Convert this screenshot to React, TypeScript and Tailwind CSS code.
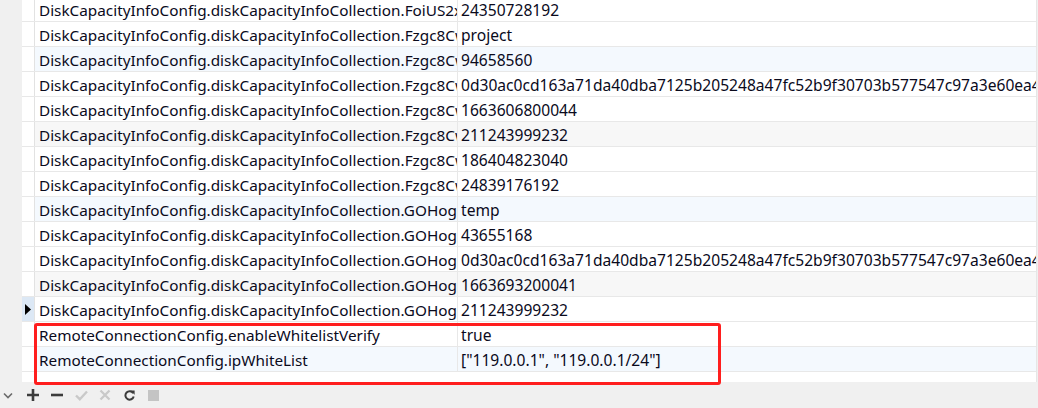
import React from "react";

const PREFIX = "DiskCapacityInfoConfig.diskCapacityInfoCollection.";
const HEX = "0d30ac0cd163a71da40dba7125b205248a47fc52b9f30703b577547c97a3e60ea4f1c2";

type Row = { name: string; value: string; bg: string };

const rows: Row[] = [
  { name: PREFIX + "FoiUS2xQ.totalCapacity", value: "24350728192", bg: "bg-white" },
  { name: PREFIX + "Fzgc8CwE.name", value: "project", bg: "bg-white" },
  { name: PREFIX + "Fzgc8CwE.usedCapacity", value: "94658560", bg: "bg-[#f4f9fe]" },
  { name: PREFIX + "Fzgc8CwE.id", value: HEX, bg: "bg-white" },
  { name: PREFIX + "Fzgc8CwE.updateTime", value: "1663606800044", bg: "bg-white" },
  { name: PREFIX + "Fzgc8CwE.totalCapacity", value: "211243999232", bg: "bg-[#f7f7f7]" },
  { name: PREFIX + "Fzgc8CwE.freeCapacity", value: "186404823040", bg: "bg-white" },
  { name: PREFIX + "Fzgc8CwE.availableCapacity", value: "24839176192", bg: "bg-white" },
  { name: PREFIX + "GOHogK2a.name", value: "temp", bg: "bg-[#f4f9fe]" },
  { name: PREFIX + "GOHogK2a.usedCapacity", value: "43655168", bg: "bg-white" },
  { name: PREFIX + "GOHogK2a.id", value: HEX, bg: "bg-white" },
  { name: PREFIX + "GOHogK2a.updateTime", value: "1663693200041", bg: "bg-[#f7f7f7]" },
  { name: PREFIX + "GOHogK2a.totalCapacity", value: "211243999232", bg: "bg-white" },
  { name: "RemoteConnectionConfig.enableWhitelistVerify", value: "true", bg: "bg-white" },
  { name: "RemoteConnectionConfig.ipWhiteList", value: '["119.0.0.1", "119.0.0.1/24"]', bg: "bg-[#f4f9fe]" },
];

function ToolIcon({ children }: { children: React.ReactNode }) {
  return <div className="w-[24px] h-[26px] flex items-center justify-center">{children}</div>;
}

export default function App() {
  return (
    <div
      className="w-[1038px] h-[408px] bg-[#f0f0f0] flex flex-col overflow-hidden text-[#0a0a1c]"
      style={{ fontFamily: '"Noto Sans", "Microsoft YaHei", sans-serif' }}
    >
      <div className="h-[382px] flex pl-[22px] pr-[1px] relative">
        <div className="flex-1 bg-white border-r border-[#e6e6e6] overflow-hidden">
          <div className="-mt-[3px] flex flex-col">
            {rows.map((r, i) => (
              <div key={i} className="flex h-[25px] border-b border-[#e8e8e8]">
                <div
                  className={
                    "w-[13px] shrink-0 border-r border-[#e2e2e2] flex items-center justify-center " +
                    (i === 12 ? "bg-[#dce8f5]" : "bg-white")
                  }
                >
                  {i === 12 && (
                    <svg width="6" height="11" viewBox="0 0 6 11">
                      <path d="M0 0 L6 5.5 L0 11 Z" fill="#000" />
                    </svg>
                  )}
                </div>
                <div className={"flex flex-1 " + r.bg}>
                  <div className="w-[423px] shrink-0 border-r border-[#e8e8e8] overflow-hidden whitespace-nowrap pl-[4px] pt-[1px] text-[15.3px] leading-[24px]">
                    {r.name}
                  </div>
                  <div className="flex-1 overflow-hidden whitespace-nowrap pl-[3px] pt-[1px] text-[15.6px] leading-[24px]">
                    {r.value}
                  </div>
                </div>
              </div>
            ))}
          </div>
        </div>
        <div className="absolute left-[34px] top-[323px] w-[687px] h-[62px] border-[3px] border-[#ff1e1e] rounded-[3px] pointer-events-none" />
      </div>
      <div className="h-[26px] flex items-center">
        <div className="w-[16px] h-[26px] flex items-center justify-center">
          <svg width="10" height="7" viewBox="0 0 10 7">
            <path d="M1 1.5 L5 5.5 L9 1.5" stroke="#6b6b6b" strokeWidth="1.6" fill="none" />
          </svg>
        </div>
        <div className="w-[5px]" />
        <ToolIcon>
          <svg width="12" height="12" viewBox="0 0 12 12">
            <path d="M6 0 V12 M0 6 H12" stroke="#3c3c3c" strokeWidth="2.6" />
          </svg>
        </ToolIcon>
        <ToolIcon>
          <svg width="12" height="12" viewBox="0 0 12 12">
            <path d="M0 6 H12" stroke="#3c3c3c" strokeWidth="2.6" />
          </svg>
        </ToolIcon>
        <ToolIcon>
          <svg width="13" height="11" viewBox="0 0 13 11">
            <path d="M1 5.5 L4.8 9.2 L12 1.5" stroke="#c9c9c9" strokeWidth="2.4" fill="none" />
          </svg>
        </ToolIcon>
        <ToolIcon>
          <svg width="12" height="12" viewBox="0 0 12 12">
            <path d="M1.5 1.5 L10.5 10.5 M10.5 1.5 L1.5 10.5" stroke="#c9c9c9" strokeWidth="2.3" />
          </svg>
        </ToolIcon>
        <ToolIcon>
          <svg width="11" height="11" viewBox="0 0 11 11">
            <path d="M9.2 3.2 A4.2 4.2 0 1 0 9.7 6.5" stroke="#3c3c3c" strokeWidth="2" fill="none" />
            <path d="M6.4 0.6 L10.6 0.6 L10.6 4.8 Z" fill="#3c3c3c" />
          </svg>
        </ToolIcon>
        <ToolIcon>
          <div className="w-[11px] h-[11px] bg-[#c4c4c4]" />
        </ToolIcon>
      </div>
    </div>
  );
}
